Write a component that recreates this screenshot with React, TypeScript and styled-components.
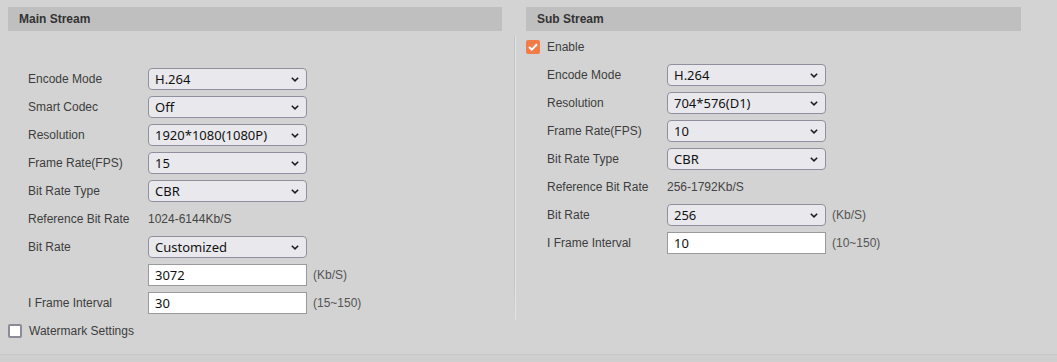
import React from 'react';
import styled, { createGlobalStyle } from 'styled-components';

const GlobalStyle = createGlobalStyle`
  html, body {
    margin: 0;
    padding: 0;
    background: #d3d3d3;
  }
  body {
    font-family: "Liberation Sans", Arial, sans-serif;
    font-size: 12px;
    color: #3a3a3a;
  }
`;

const Page = styled.div`
  width: 1057px;
  height: 362px;
  display: flex;
  flex-direction: column;
  overflow: hidden;
`;

const Columns = styled.div`
  display: flex;
  padding: 7px 0 0 8px;
  height: 354px;
  flex-shrink: 0;
  box-sizing: border-box;
`;

const Panel = styled.section<{ $width: number }>`
  width: ${p => p.$width}px;
  display: flex;
  flex-direction: column;
`;

const PanelHeader = styled.header`
  height: 24px;
  background: #bfbfbf;
  color: #333;
  font-weight: bold;
  font-size: 12px;
  line-height: 24px;
  padding-left: 11px;
`;

const PanelBody = styled.div<{ $top: number }>`
  display: flex;
  flex-direction: column;
  gap: 6px;
  padding-top: ${p => p.$top}px;
`;

const Divider = styled.div`
  width: 24px;
  display: flex;
  justify-content: center;
  padding-top: 30px;
  box-sizing: border-box;

  &::before {
    content: '';
    display: block;
    width: 1px;
    height: 283px;
    margin-left: 1px;
    background: linear-gradient(#c2c2c2 85%, rgba(194,194,194,0));
    box-shadow: 1px 0 0 rgba(235,235,235,.7);
  }
`;

const Row = styled.div<{ $indent: number }>`
  display: grid;
  grid-template-columns: 120px 159px auto;
  align-items: center;
  height: 22px;
  padding-left: ${p => p.$indent}px;
`;

const Label = styled.span`
  color: #3d3d3d;
  white-space: nowrap;
`;

const Value = styled.span`
  color: #444;
`;

const Unit = styled.span`
  color: #555;
  padding-left: 6px;
`;

const SelectBox = styled.div`
  position: relative;
  height: 22px;
  box-sizing: border-box;
  background: #e9e9ed;
  border: 1px solid #8f8f9d;
  border-radius: 4px;
  font-family: "Noto Sans", "Open Sans", sans-serif;
  font-size: 13px;
  color: #111;
  line-height: 20px;
  padding-left: 6px;
`;

const Chevron = styled.svg`
  position: absolute;
  right: 7px;
  top: 8px;
`;

const TextInput = styled.input`
  width: 159px;
  height: 22px;
  box-sizing: border-box;
  background: #fff;
  border: 1px solid #9a9a9a;
  border-radius: 0;
  font-family: "Noto Sans", "Open Sans", sans-serif;
  font-size: 13px;
  color: #111;
  padding: 0 0 0 6px;
  outline: none;
`;

const CheckRow = styled.label`
  display: flex;
  align-items: center;
  gap: 7px;
  height: 22px;
  color: #3d3d3d;
`;

const Box = styled.span<{ $checked?: boolean }>`
  width: 14px;
  height: 14px;
  box-sizing: border-box;
  border-radius: 2px;
  display: flex;
  align-items: center;
  justify-content: center;
  background: ${p => (p.$checked ? '#f27c48' : '#fff')};
  border: ${p => (p.$checked ? 'none' : '2px solid #8d8b97')};
`;

const Footer = styled.div`
  flex: 1;
  border-top: 1px solid #c7c7c7;
  background: #cfcfcf;
`;

const Select = ({ value }: { value: string }) => (
  <SelectBox>
    {value}
    <Chevron width="8" height="5" viewBox="0 0 8 5">
      <path d="M0.8 0.8 L4 3.9 L7.2 0.8" fill="none" stroke="#1a1a1a" strokeWidth="1.5" />
    </Chevron>
  </SelectBox>
);

const Check = ({ checked, label }: { checked?: boolean; label: string }) => (
  <CheckRow>
    <Box $checked={checked}>
      {checked && (
        <svg width="10" height="8" viewBox="0 0 10 8">
          <path d="M1 4 L3.8 6.6 L9 1.2" fill="none" stroke="#fff" strokeWidth="2" />
        </svg>
      )}
    </Box>
    {label}
  </CheckRow>
);

type Field =
  | { label: string; kind: 'select'; value: string; unit?: string }
  | { label: string; kind: 'input'; value: string; unit?: string }
  | { label: string; kind: 'text'; value: string };

const mainFields: Field[] = [
  { label: 'Encode Mode', kind: 'select', value: 'H.264' },
  { label: 'Smart Codec', kind: 'select', value: 'Off' },
  { label: 'Resolution', kind: 'select', value: '1920*1080(1080P)' },
  { label: 'Frame Rate(FPS)', kind: 'select', value: '15' },
  { label: 'Bit Rate Type', kind: 'select', value: 'CBR' },
  { label: 'Reference Bit Rate', kind: 'text', value: '1024-6144Kb/S' },
  { label: 'Bit Rate', kind: 'select', value: 'Customized' },
  { label: '', kind: 'input', value: '3072', unit: '(Kb/S)' },
  { label: 'I Frame Interval', kind: 'input', value: '30', unit: '(15~150)' },
];

const subFields: Field[] = [
  { label: 'Encode Mode', kind: 'select', value: 'H.264' },
  { label: 'Resolution', kind: 'select', value: '704*576(D1)' },
  { label: 'Frame Rate(FPS)', kind: 'select', value: '10' },
  { label: 'Bit Rate Type', kind: 'select', value: 'CBR' },
  { label: 'Reference Bit Rate', kind: 'text', value: '256-1792Kb/S' },
  { label: 'Bit Rate', kind: 'select', value: '256', unit: '(Kb/S)' },
  { label: 'I Frame Interval', kind: 'input', value: '10', unit: '(10~150)' },
];

const FieldRow = ({ field, indent }: { field: Field; indent: number }) => (
  <Row $indent={indent}>
    <Label>{field.label}</Label>
    {field.kind === 'select' && <Select value={field.value} />}
    {field.kind === 'input' && <TextInput defaultValue={field.value} />}
    {field.kind === 'text' && <Value>{field.value}</Value>}
    {field.kind !== 'text' && field.unit && <Unit>{field.unit}</Unit>}
  </Row>
);

export default function App() {
  return (
    <Page>
      <GlobalStyle />
      <Columns>
        <Panel $width={494}>
          <PanelHeader>Main Stream</PanelHeader>
          <PanelBody $top={37}>
            {mainFields.map((f, i) => (
              <FieldRow key={i} field={f} indent={20} />
            ))}
            <Check label="Watermark Settings" />
          </PanelBody>
        </Panel>
        <Divider />
        <Panel $width={495}>
          <PanelHeader>Sub Stream</PanelHeader>
          <PanelBody $top={5}>
            <Check checked label="Enable" />
            {subFields.map((f, i) => (
              <FieldRow key={i} field={f} indent={21} />
            ))}
          </PanelBody>
        </Panel>
      </Columns>
      <Footer />
    </Page>
  );
}
